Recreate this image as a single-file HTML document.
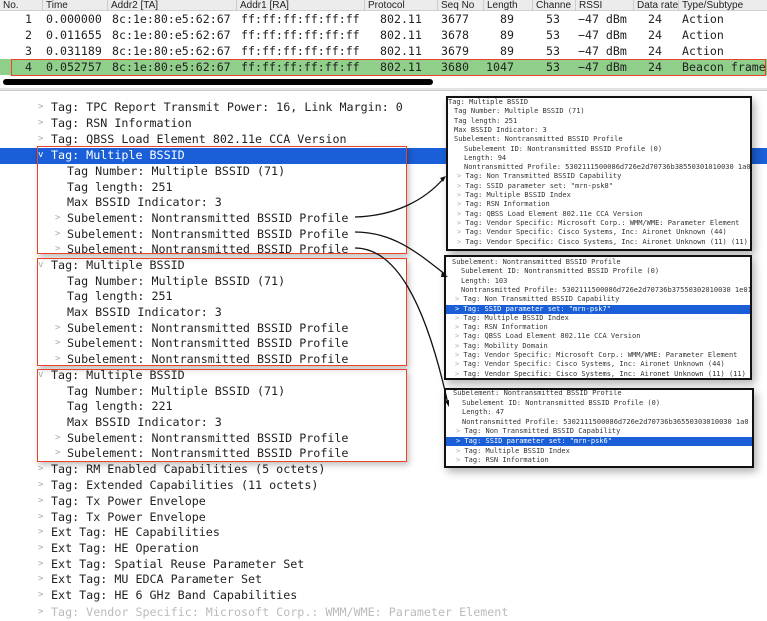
<!DOCTYPE html>
<html><head><meta charset="utf-8"><style>
*{margin:0;padding:0;box-sizing:border-box}
body{width:767px;height:606px;overflow:hidden;background:#fff;position:relative;font-family:"DejaVu Sans Mono","Liberation Mono",monospace;color:#222}
.hdr{position:absolute;top:0;left:0;width:767px;height:11px;background:#ececec;border-bottom:1px solid #d0d0d0;font-family:"Liberation Sans",sans-serif;font-size:10px;line-height:11px}
.hdr span{position:absolute;top:0;padding-left:3px;border-left:1px solid #ccc;height:11px}
.row{position:absolute;left:0;width:767px;height:16px;font-size:11.6px;line-height:16px;white-space:pre}
.row span{position:absolute;top:0}
.l{position:absolute;font-size:11.7px;line-height:15.6px;height:15.6px;white-space:pre;left:0;width:767px}
.l i{font-style:normal;position:absolute;color:#aaa;font-size:9px}
.red{position:absolute;border:1.5px solid #e8432b;box-shadow:2px 3px 6px rgba(0,0,0,.25)}
.box{position:absolute;background:#fff;border:2px solid #111;box-shadow:3px 4px 8px rgba(0,0,0,.3);overflow:hidden;font-size:7px;white-space:pre;color:#333}
.box div{position:absolute;left:0;width:100%;height:9.3px;line-height:9.3px}
.box i{font-style:normal;color:#aaa}
.sel{background:#1a5fd8;color:#fff!important}
#t{position:absolute;left:0;top:2px;width:767px;height:606px}
</style></head><body>
<div class="hdr">
<span style="left:0;border:none">No.</span><span style="left:42px">Time</span><span style="left:107px">Addr2 [TA]</span><span style="left:236px">Addr1 [RA]</span><span style="left:364px">Protocol</span><span style="left:437px">Seq No</span><span style="left:483px">Length</span><span style="left:532px">Channe</span><span style="left:575px">RSSI</span><span style="left:633px">Data rate</span><span style="left:678px">Type/Subtype</span>
</div>
<div class="row" style="top:11px"><span style="left:25px">1</span><span style="left:46px">0.000000</span><span style="left:112px">8c:1e:80:e5:62:67</span><span style="left:241px">ff:ff:ff:ff:ff:ff</span><span style="left:380px">802.11</span><span style="left:441px">3677</span><span style="left:500px">89</span><span style="left:546px">53</span><span style="left:578px">−47 dBm</span><span style="left:648px">24</span><span style="left:682px">Action</span></div>
<div class="row" style="top:27px"><span style="left:25px">2</span><span style="left:46px">0.011655</span><span style="left:112px">8c:1e:80:e5:62:67</span><span style="left:241px">ff:ff:ff:ff:ff:ff</span><span style="left:380px">802.11</span><span style="left:441px">3678</span><span style="left:500px">89</span><span style="left:546px">53</span><span style="left:578px">−47 dBm</span><span style="left:648px">24</span><span style="left:682px">Action</span></div>
<div class="row" style="top:43px"><span style="left:25px">3</span><span style="left:46px">0.031189</span><span style="left:112px">8c:1e:80:e5:62:67</span><span style="left:241px">ff:ff:ff:ff:ff:ff</span><span style="left:380px">802.11</span><span style="left:441px">3679</span><span style="left:500px">89</span><span style="left:546px">53</span><span style="left:578px">−47 dBm</span><span style="left:648px">24</span><span style="left:682px">Action</span></div>
<div class="row" style="top:59px;background:#8fcf8a"><span style="left:25px">4</span><span style="left:46px">0.052757</span><span style="left:112px">8c:1e:80:e5:62:67</span><span style="left:241px">ff:ff:ff:ff:ff:ff</span><span style="left:380px">802.11</span><span style="left:441px">3680</span><span style="left:486px">1047</span><span style="left:546px">53</span><span style="left:578px">−47 dBm</span><span style="left:648px">24</span><span style="left:682px">Beacon frame</span></div>
<div style="position:absolute;left:11px;top:59px;width:755px;height:17px;border:1.5px solid #e8432b"></div>
<div style="position:absolute;left:3px;top:79px;width:430px;height:6px;background:#000;border-radius:3px"></div>
<div style="position:absolute;left:0;top:88px;width:767px;height:3px;background:#e4e4e4;border-bottom:1px solid #ccc"></div>

<div id="t">
<div class="l" style="top:98px"><i style="left:38px">&gt;</i><span style="position:absolute;left:51px">Tag: TPC Report Transmit Power: 16, Link Margin: 0</span></div>
<div class="l" style="top:114px"><i style="left:38px">&gt;</i><span style="position:absolute;left:51px">Tag: RSN Information</span></div>
<div class="l" style="top:130px"><i style="left:38px">&gt;</i><span style="position:absolute;left:51px">Tag: QBSS Load Element 802.11e CCA Version</span></div>
<div class="l sel" style="top:146px"><i style="left:38px;color:#fff">v</i><span style="position:absolute;left:51px">Tag: Multiple BSSID</span></div>
<div class="l" style="top:162px"><span style="position:absolute;left:67px">Tag Number: Multiple BSSID (71)</span></div>
<div class="l" style="top:178px"><span style="position:absolute;left:67px">Tag length: 251</span></div>
<div class="l" style="top:193px"><span style="position:absolute;left:67px">Max BSSID Indicator: 3</span></div>
<div class="l" style="top:209px"><i style="left:55px">&gt;</i><span style="position:absolute;left:67px">Subelement: Nontransmitted BSSID Profile</span></div>
<div class="l" style="top:225px"><i style="left:55px">&gt;</i><span style="position:absolute;left:67px">Subelement: Nontransmitted BSSID Profile</span></div>
<div class="l" style="top:240px"><i style="left:55px">&gt;</i><span style="position:absolute;left:67px">Subelement: Nontransmitted BSSID Profile</span></div>
<div class="l" style="top:256px"><i style="left:38px">v</i><span style="position:absolute;left:51px">Tag: Multiple BSSID</span></div>
<div class="l" style="top:272px"><span style="position:absolute;left:67px">Tag Number: Multiple BSSID (71)</span></div>
<div class="l" style="top:287px"><span style="position:absolute;left:67px">Tag length: 251</span></div>
<div class="l" style="top:303px"><span style="position:absolute;left:67px">Max BSSID Indicator: 3</span></div>
<div class="l" style="top:319px"><i style="left:55px">&gt;</i><span style="position:absolute;left:67px">Subelement: Nontransmitted BSSID Profile</span></div>
<div class="l" style="top:334px"><i style="left:55px">&gt;</i><span style="position:absolute;left:67px">Subelement: Nontransmitted BSSID Profile</span></div>
<div class="l" style="top:350px"><i style="left:55px">&gt;</i><span style="position:absolute;left:67px">Subelement: Nontransmitted BSSID Profile</span></div>
<div class="l" style="top:366px"><i style="left:38px">v</i><span style="position:absolute;left:51px">Tag: Multiple BSSID</span></div>
<div class="l" style="top:382px"><span style="position:absolute;left:67px">Tag Number: Multiple BSSID (71)</span></div>
<div class="l" style="top:397px"><span style="position:absolute;left:67px">Tag length: 221</span></div>
<div class="l" style="top:413px"><span style="position:absolute;left:67px">Max BSSID Indicator: 3</span></div>
<div class="l" style="top:429px"><i style="left:55px">&gt;</i><span style="position:absolute;left:67px">Subelement: Nontransmitted BSSID Profile</span></div>
<div class="l" style="top:444px"><i style="left:55px">&gt;</i><span style="position:absolute;left:67px">Subelement: Nontransmitted BSSID Profile</span></div>
<div class="l" style="top:460px"><i style="left:38px">&gt;</i><span style="position:absolute;left:51px">Tag: RM Enabled Capabilities (5 octets)</span></div>
<div class="l" style="top:476px"><i style="left:38px">&gt;</i><span style="position:absolute;left:51px">Tag: Extended Capabilities (11 octets)</span></div>
<div class="l" style="top:492px"><i style="left:38px">&gt;</i><span style="position:absolute;left:51px">Tag: Tx Power Envelope</span></div>
<div class="l" style="top:508px"><i style="left:38px">&gt;</i><span style="position:absolute;left:51px">Tag: Tx Power Envelope</span></div>
<div class="l" style="top:523px"><i style="left:38px">&gt;</i><span style="position:absolute;left:51px">Ext Tag: HE Capabilities</span></div>
<div class="l" style="top:539px"><i style="left:38px">&gt;</i><span style="position:absolute;left:51px">Ext Tag: HE Operation</span></div>
<div class="l" style="top:555px"><i style="left:38px">&gt;</i><span style="position:absolute;left:51px">Ext Tag: Spatial Reuse Parameter Set</span></div>
<div class="l" style="top:570px"><i style="left:38px">&gt;</i><span style="position:absolute;left:51px">Ext Tag: MU EDCA Parameter Set</span></div>
<div class="l" style="top:586px"><i style="left:38px">&gt;</i><span style="position:absolute;left:51px">Ext Tag: HE 6 GHz Band Capabilities</span></div>
<div class="l" style="top:603px;color:#bbb"><i style="left:38px">&gt;</i><span style="position:absolute;left:51px">Tag: Vendor Specific: Microsoft Corp.: WMM/WME: Parameter Element</span></div>
</div>

<div class="red" style="left:37px;top:146px;width:370px;height:108px"></div>
<div class="red" style="left:37px;top:258px;width:370px;height:108px"></div>
<div class="red" style="left:37px;top:369px;width:370px;height:93px"></div>

<div class="box" style="left:446px;top:96px;width:306px;height:155px">
<div style="top:0;left:0">Tag: Multiple BSSID</div>
<div style="top:9.3px;padding-left:6px">Tag Number: Multiple BSSID (71)</div>
<div style="top:18.6px;padding-left:6px">Tag length: 251</div>
<div style="top:27.9px;padding-left:6px">Max BSSID Indicator: 3</div>
<div style="top:37.2px;padding-left:6px">Subelement: Nontransmitted BSSID Profile</div>
<div style="top:46.5px;padding-left:16px">Subelement ID: Nontransmitted BSSID Profile (0)</div>
<div style="top:55.8px;padding-left:16px">Length: 94</div>
<div style="top:65.1px;padding-left:16px">Nontransmitted Profile: 5302111500086d726e2d70736b38550301010030 1a01</div>
<div style="top:74.4px;padding-left:9px"><i>&gt;</i> Tag: Non Transmitted BSSID Capability</div>
<div style="top:83.7px;padding-left:9px"><i>&gt;</i> Tag: SSID parameter set: "mrn-psk8"</div>
<div style="top:93px;padding-left:9px"><i>&gt;</i> Tag: Multiple BSSID Index</div>
<div style="top:102.3px;padding-left:9px"><i>&gt;</i> Tag: RSN Information</div>
<div style="top:111.6px;padding-left:9px"><i>&gt;</i> Tag: QBSS Load Element 802.11e CCA Version</div>
<div style="top:120.9px;padding-left:9px"><i>&gt;</i> Tag: Vendor Specific: Microsoft Corp.: WMM/WME: Parameter Element</div>
<div style="top:130.2px;padding-left:9px"><i>&gt;</i> Tag: Vendor Specific: Cisco Systems, Inc: Aironet Unknown (44)</div>
<div style="top:139.5px;padding-left:9px"><i>&gt;</i> Tag: Vendor Specific: Cisco Systems, Inc: Aironet Unknown (11) (11)</div>
</div>

<div class="box" style="left:444px;top:255px;width:308px;height:125px">
<div style="top:1px;padding-left:6px">Subelement: Nontransmitted BSSID Profile</div>
<div style="top:10.3px;padding-left:15px">Subelement ID: Nontransmitted BSSID Profile (0)</div>
<div style="top:19.6px;padding-left:15px">Length: 103</div>
<div style="top:28.9px;padding-left:15px">Nontransmitted Profile: 5302111500086d726e2d70736b37550302010030 1e010</div>
<div style="top:38.2px;padding-left:9px"><i>&gt;</i> Tag: Non Transmitted BSSID Capability</div>
<div class="sel" style="top:47.5px;padding-left:9px">&gt; Tag: SSID parameter set: "mrn-psk7"</div>
<div style="top:56.8px;padding-left:9px"><i>&gt;</i> Tag: Multiple BSSID Index</div>
<div style="top:66.1px;padding-left:9px"><i>&gt;</i> Tag: RSN Information</div>
<div style="top:75.4px;padding-left:9px"><i>&gt;</i> Tag: QBSS Load Element 802.11e CCA Version</div>
<div style="top:84.7px;padding-left:9px"><i>&gt;</i> Tag: Mobility Domain</div>
<div style="top:94px;padding-left:9px"><i>&gt;</i> Tag: Vendor Specific: Microsoft Corp.: WMM/WME: Parameter Element</div>
<div style="top:103.3px;padding-left:9px"><i>&gt;</i> Tag: Vendor Specific: Cisco Systems, Inc: Aironet Unknown (44)</div>
<div style="top:112.6px;padding-left:9px"><i>&gt;</i> Tag: Vendor Specific: Cisco Systems, Inc: Aironet Unknown (11) (11)</div>
</div>

<div class="box" style="left:444px;top:388px;width:310px;height:80px">
<div style="top:-1px;padding-left:7px">Subelement: Nontransmitted BSSID Profile</div>
<div style="top:8.6px;padding-left:16px">Subelement ID: Nontransmitted BSSID Profile (0)</div>
<div style="top:18.2px;padding-left:16px">Length: 47</div>
<div style="top:27.8px;padding-left:16px">Nontransmitted Profile: 5302111500086d726e2d70736b36550303010030 1a0</div>
<div style="top:37.4px;padding-left:10px"><i>&gt;</i> Tag: Non Transmitted BSSID Capability</div>
<div class="sel" style="top:47px;padding-left:10px">&gt; Tag: SSID parameter set: "mrn-psk6"</div>
<div style="top:56.6px;padding-left:10px"><i>&gt;</i> Tag: Multiple BSSID Index</div>
<div style="top:66.2px;padding-left:10px"><i>&gt;</i> Tag: RSN Information</div>
</div>

<svg style="position:absolute;left:0;top:0" width="767" height="606">
<g fill="none" stroke="#111" stroke-width="1.3">
<path d="M355 217 C395 216 425 200 444 178"/>
<path d="M355 232 C395 232 420 255 446 275"/>
<path d="M355 248 C395 248 425 300 448 404"/>
</g>
<g fill="#111">
<path d="M446 176 l-6 2 l3 4z"/>
<path d="M448 277 l-6 -5 l-1 5z"/>
<path d="M449 407 l-4 -6 l4 -1z"/>
</g>
</svg>
</body></html>
